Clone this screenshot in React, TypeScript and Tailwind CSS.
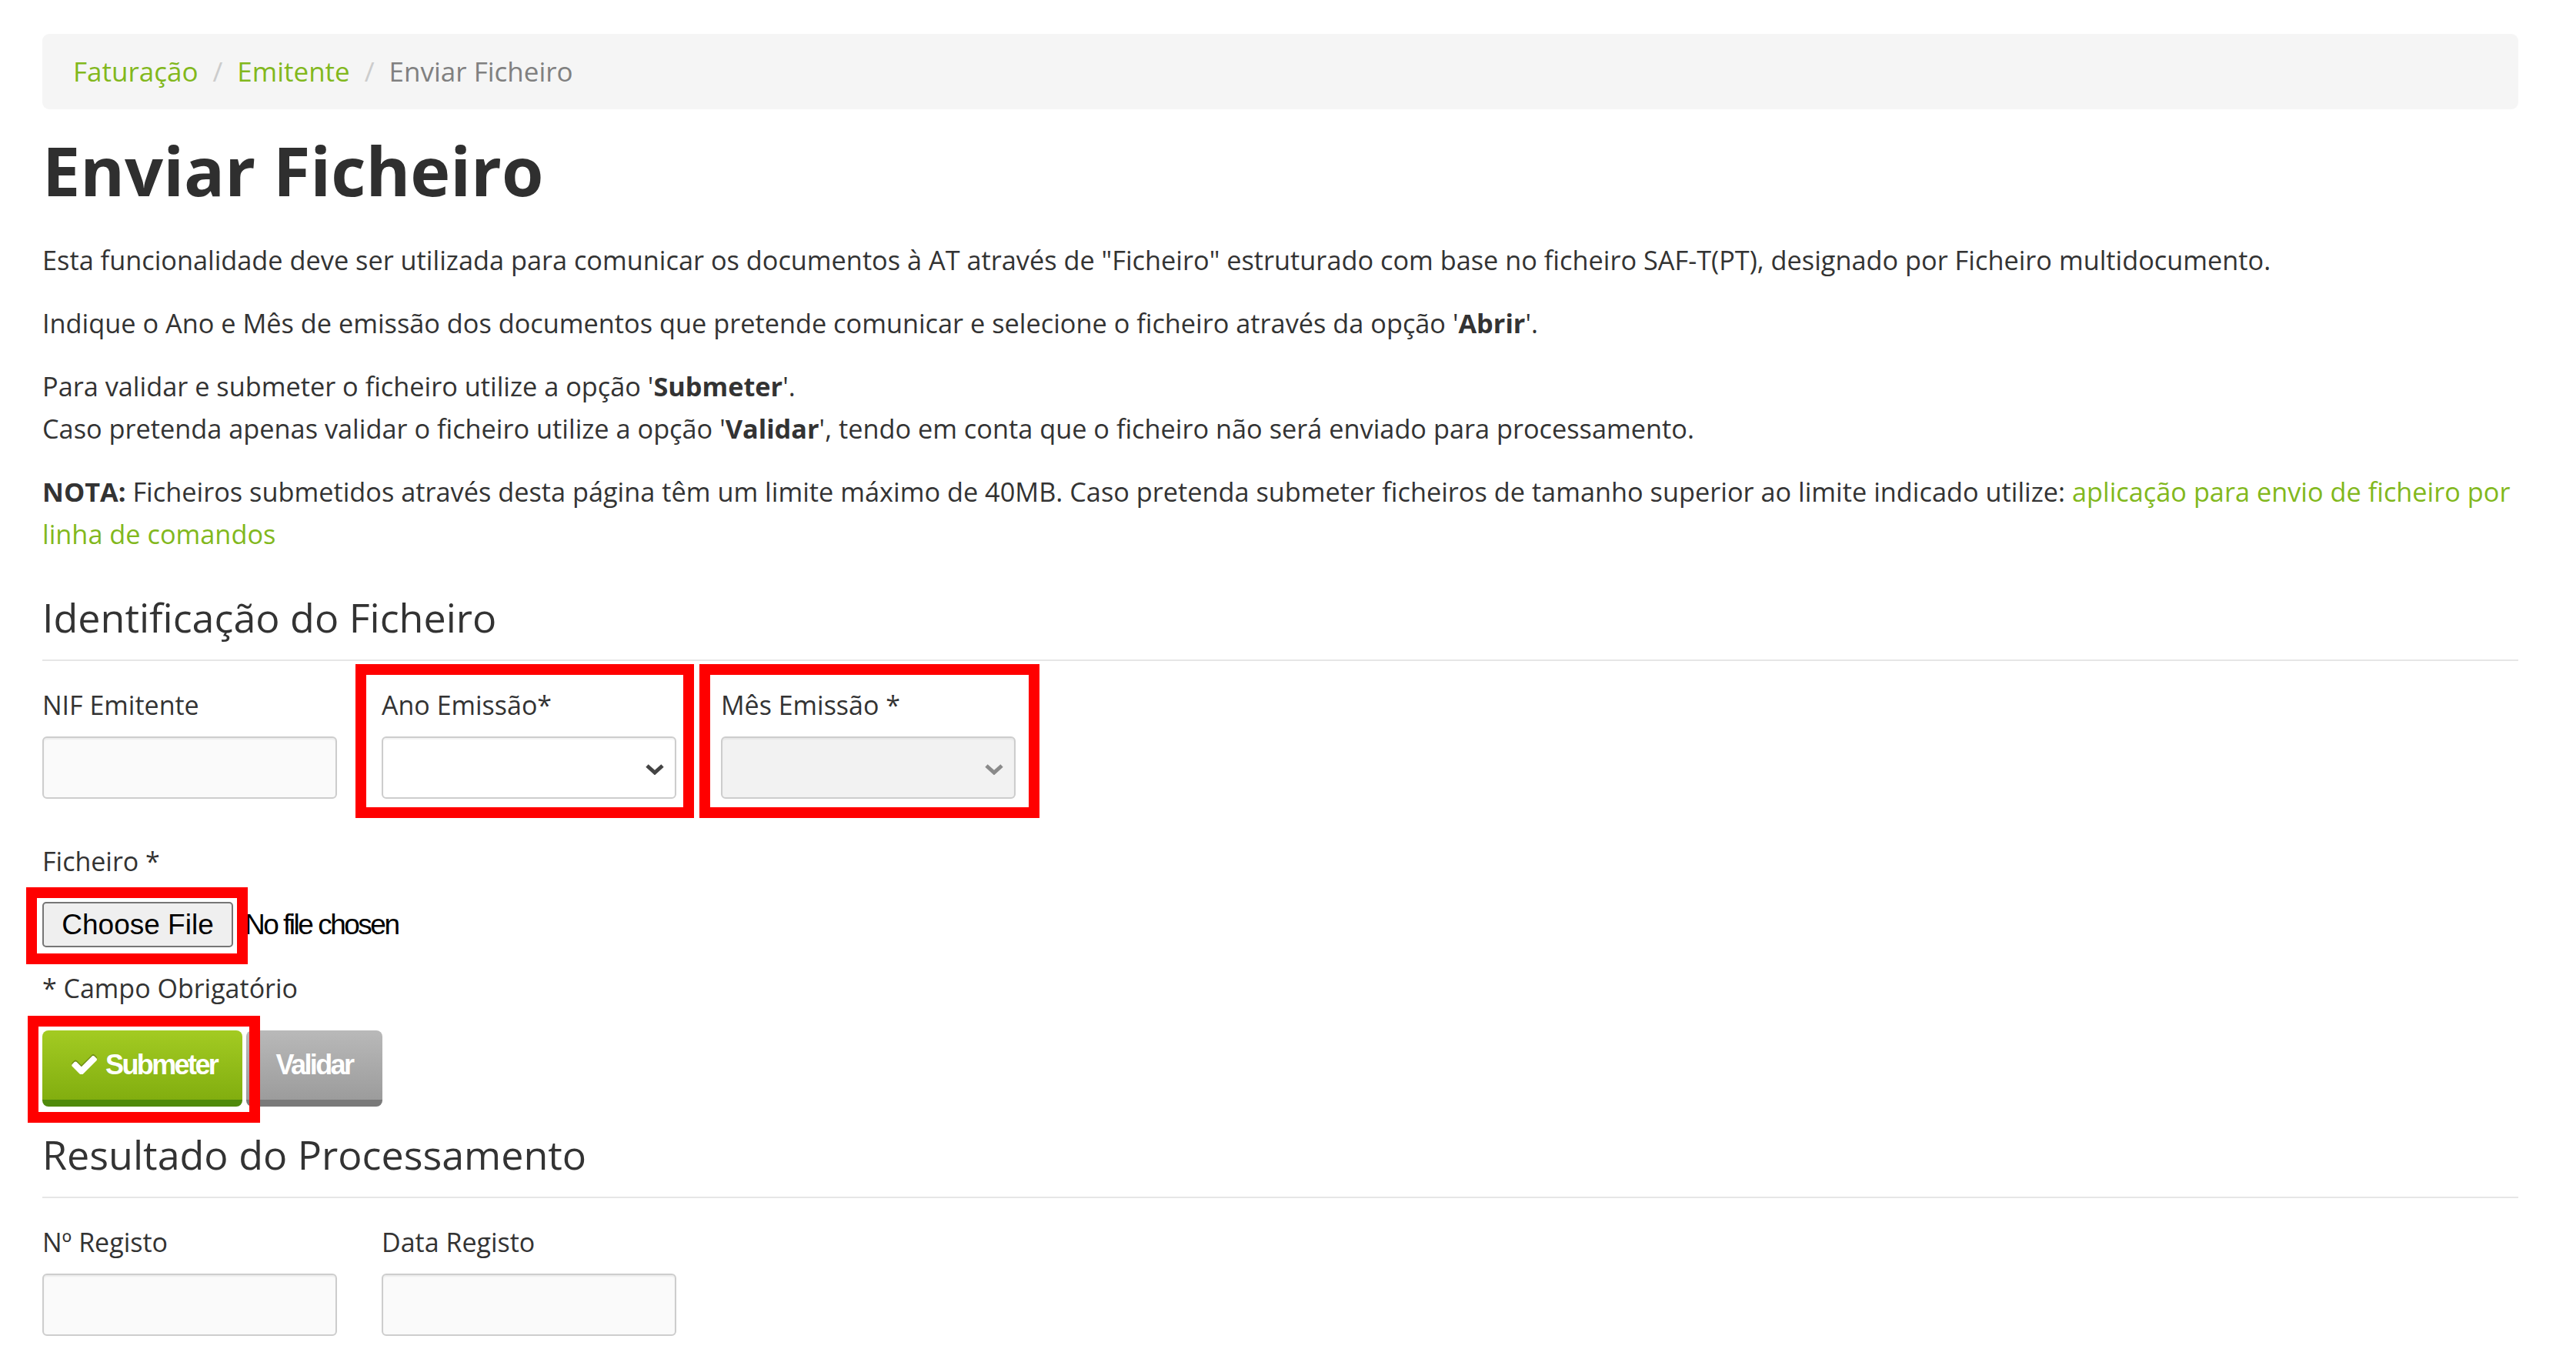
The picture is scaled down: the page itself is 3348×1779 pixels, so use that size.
const green = 'text-[#82b81d]'

function Chevron({ color }: { color: string }) {
  return (
    <svg width="26" height="15" viewBox="0 0 26 15" fill="none" className="absolute right-[13px] top-[33px]">
      <path d="M3 3L13 12L23 3" stroke={color} strokeWidth={5} strokeLinejoin="miter" />
    </svg>
  )
}

function CheckIcon() {
  return (
    <svg width="33" height="24" viewBox="109 362 1562 1096" fill="currentColor" className="[filter:drop-shadow(0_-2px_0_rgba(0,0,0,0.25))]">
      <path d="M1671 566q0 40-28 68l-724 724-136 136q-28 28-68 28t-68-28l-136-136-362-362q-28-28-28-68t28-68l136-136q28-28 68-28t68 28l294 295 656-657q28-28 68-28t68 28l136 136q28 28 28 68z" />
    </svg>
  )
}

function Mark({ className }: { className: string }) {
  return <div className={`pointer-events-none absolute z-10 border-[14px] border-[#ff0000] ${className}`} />
}

function Field({
  label,
  children,
  mark,
}: {
  label: string
  children: React.ReactNode
  mark?: React.ReactNode
}) {
  return (
    <div className="relative w-[383px]">
      <div className="h-[40px] text-[34px] leading-[40px] whitespace-nowrap">{label}</div>
      <div className="mt-[21px]">{children}</div>
      {mark}
    </div>
  )
}

function TextBox() {
  return (
    <div className="h-[81px] w-[383px] rounded-[6px] border-2 border-[#cdcdcd] bg-[#fafafa] shadow-[inset_0_2px_2px_rgba(0,0,0,0.06)]" />
  )
}

function Select({ disabled }: { disabled?: boolean }) {
  return (
    <div
      className={`relative h-[81px] w-[383px] rounded-[6px] border-2 border-[#cdcdcd] shadow-[inset_0_2px_2px_rgba(0,0,0,0.05)] ${
        disabled ? 'bg-[#f2f2f2]' : 'bg-white'
      }`}
    >
      <Chevron color={disabled ? '#8a8a8a' : '#444444'} />
    </div>
  )
}

function SectionTitle({ children, className = '' }: { children: React.ReactNode; className?: string }) {
  return (
    <h2 className={`border-b-2 border-[#e6e6e6] pb-[25px] text-[52px] leading-[60px] font-normal ${className}`}>
      {children}
    </h2>
  )
}

export default function App() {
  return (
    <div className="min-h-screen bg-white pt-[44px] pl-[55px] font-['Open_Sans',sans-serif] text-[#333333]">
      <div className="w-[3218px]">
        {/* Breadcrumb */}
        <nav className="flex h-[98px] items-center rounded-[9px] bg-[#f5f5f5] px-[40px] text-[35px]">
          <a className={green}>Faturação</a>
          <span className="px-[19px] text-[#cccccc]">/</span>
          <a className={green}>Emitente</a>
          <span className="px-[19px] text-[#cccccc]">/</span>
          <span className="text-[#808080]">Enviar Ficheiro</span>
        </nav>

        <h1 className="mt-[24px] text-[88px] leading-[110px] font-bold text-[#2f2f2f]">Enviar Ficheiro</h1>

        {/* Intro */}
        <div className="mt-[34px] text-[34.3px] leading-[55px]">
          <p className="mb-[27px]">
            Esta funcionalidade deve ser utilizada para comunicar os documentos à AT através de "Ficheiro" estruturado
            com base no ficheiro SAF-T(PT), designado por Ficheiro multidocumento.
          </p>
          <p className="mb-[27px]">
            Indique o Ano e Mês de emissão dos documentos que pretende comunicar e selecione o ficheiro através da opção
            '<b>Abrir</b>'.
          </p>
          <p className="mb-[27px]">
            Para validar e submeter o ficheiro utilize a opção '<b>Submeter</b>'.
            <br />
            Caso pretenda apenas validar o ficheiro utilize a opção '<b>Validar</b>', tendo em conta que o ficheiro não
            será enviado para processamento.
          </p>
          <p className="whitespace-nowrap">
            <b>NOTA:</b> Ficheiros submetidos através desta página têm um limite máximo de 40MB. Caso pretenda submeter
            ficheiros de tamanho superior ao limite indicado utilize:{' '}
            <a className={green}>
              aplicação para envio de ficheiro por
              <br />
              linha de comandos
            </a>
          </p>
        </div>

        {/* Identificação do Ficheiro */}
        <SectionTitle className="mt-[51px]">Identificação do Ficheiro</SectionTitle>

        <div className="mt-[37px] flex gap-[58px]">
          <Field label="NIF Emitente">
            <TextBox />
          </Field>
          <Field
            label="Ano Emissão*"
            mark={<Mark className="top-[-33px] right-[-23px] bottom-[-25px] left-[-34px]" />}
          >
            <Select />
          </Field>
          <Field
            label="Mês Emissão *"
            mark={<Mark className="top-[-33px] right-[-31px] bottom-[-25px] left-[-28px]" />}
          >
            <Select disabled />
          </Field>
        </div>

        <div className="mt-[61px] h-[40px] text-[34px] leading-[40px]">Ficheiro *</div>
        <div className="mt-[33px] flex h-[59px] items-center font-['Liberation_Sans',Arial,sans-serif] text-[37px] text-black">
          <span className="relative">
            <button className="h-[59px] w-[248px] rounded-[5px] border-2 border-[#767676] bg-[#efefef] leading-none">
              Choose File
            </button>
            <Mark className="top-[-19px] right-[-19px] bottom-[-22px] left-[-21px]" />
          </span>
          <span className="ml-[15px] tracking-[-2.5px]">No file chosen</span>
        </div>

        <div className="mt-[33px] h-[40px] text-[34px] leading-[40px]">* Campo Obrigatório</div>

        {/* Actions */}
        <div className="mt-[35px] flex h-[99px] gap-[5px] font-['Liberation_Sans',Arial,sans-serif] text-[36px] font-bold tracking-[-2.6px] text-white [text-shadow:0_-2px_0_rgba(0,0,0,0.25)]">
          <span className="relative">
            <button className="flex h-[99px] w-[260px] items-center gap-[11px] rounded-[8px] border-b-[9px] border-[#4f8a0b] bg-linear-to-b from-[#a3cb22] to-[#82ae0f] pl-[38px]">
              <CheckIcon />
              Submeter
            </button>
            <Mark className="top-[-19px] right-[-23px] bottom-[-21px] left-[-19px]" />
          </span>
          <button className="h-[99px] w-[177px] rounded-[8px] border-b-[9px] border-[#7a7a7a] bg-linear-to-b from-[#b9b9b9] to-[#9c9c9c]">
            Validar
          </button>
        </div>

        {/* Resultado do Processamento */}
        <SectionTitle className="mt-[32px]">Resultado do Processamento</SectionTitle>

        <div className="mt-[37px] flex gap-[58px]">
          <Field label="Nº Registo">
            <TextBox />
          </Field>
          <Field label="Data Registo">
            <TextBox />
          </Field>
        </div>
      </div>
    </div>
  )
}
